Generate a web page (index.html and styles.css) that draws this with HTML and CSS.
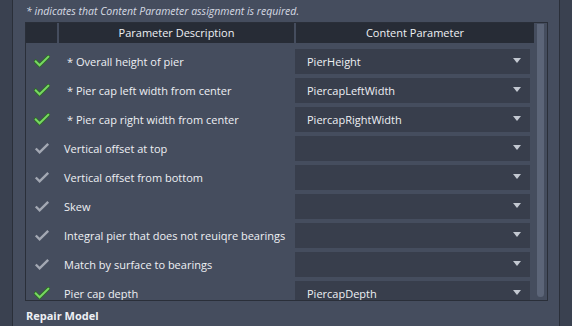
FILE: index.html
```html
<!DOCTYPE html>
<html lang="en">
<head>
  <meta charset="UTF-8">
  <title>Content Parameters</title>
  <link rel="stylesheet" href="styles.css">
</head>
<body>
  <div class="side side-left"></div>

  <div class="panel">
    <div class="note">* indicates that Content Parameter assignment is required.</div>

    <div class="grid-box">
      <div class="grid-main">
        <div class="grid-head">
          <div class="hcell"></div>
          <div class="hcell">Parameter Description</div>
          <div class="hcell">Content Parameter</div>
        </div>
        <div class="grid-body" id="rows"></div>
      </div>
      <div class="scroll"><div class="thumb"></div></div>
    </div>

    <div class="section">Repair Model</div>
  </div>

  <div class="side side-right"></div>

  <script>
    // Parameter rows: [done, description, assigned content parameter]
    const rows = [
      [true, ' * Overall height of pier', 'PierHeight'],
      [true, ' * Pier cap left width from center', 'PiercapLeftWidth'],
      [true, ' * Pier cap right width from center', 'PiercapRightWidth'],
      [false, 'Vertical offset at top', ''],
      [false, 'Vertical offset from bottom', ''],
      [false, 'Skew', ''],
      [false, 'Integral pier that does not reuiqre bearings', ''],
      [false, 'Match by surface to bearings', ''],
      [true, 'Pier cap depth', 'PiercapDepth']
    ];

    const list = document.getElementById('rows');
    rows.forEach(([done, desc, value]) => {
      const row = document.createElement('div');
      row.className = 'row';
      const check = done
        ? `<svg width="16" height="13" viewBox="0 0 16 13"><polyline points="1.8,6.5 5.6,10.3 14.2,1.8" fill="none" stroke="#2f6b2a" stroke-width="3.8" stroke-linecap="square"/><polyline points="1.8,6.5 5.6,10.3 14.2,1.8" fill="none" stroke="#78d862" stroke-width="2" stroke-linecap="square"/></svg>`
        : `<svg width="16" height="13" viewBox="0 0 16 13"><polyline points="1.8,6.5 5.6,10.3 14.2,1.8" fill="none" stroke="#a3a8b3" stroke-width="2.4"/></svg>`;
      row.innerHTML = `
        <div class="cell check">${check}</div>
        <div class="cell desc${desc.startsWith(' ') ? ' req' : ''}">${desc.trim()}</div>
        <div class="cell"><div class="dropdown"><span>${value}</span><i class="arrow"></i></div></div>
      `;
      list.appendChild(row);
    });
  </script>
</body>
</html>
```

FILE: styles.css
```css
:root {
  --panel: #454d5e;
  --side: #3a4150;
  --line: #2a2f39;
  --head: #272c36;
  --field: #383e4c;
  --text: #eef0f4;
}

body {
  margin: 0;
  height: 326px;
  overflow: hidden;
  display: flex;
  background-color: var(--panel);
  font-family: "Open Sans", sans-serif;
  font-size: 11px;
  color: var(--text);
}

.side {
  width: 12px;
  background-color: var(--side);
  flex-shrink: 0;
}

.side-left {
  border-right: 1px solid var(--line);
}

.side-right {
  width: 13px;
  border-left: 1px solid var(--line);
}

.panel {
  flex: 1;
  padding: 0 11px 0 12px;
  display: flex;
  flex-direction: column;
}

.note {
  height: 24px;
  line-height: 22px;
  padding-left: 1px;
  font-style: italic;
  font-size: 10.5px;
  color: #d6dae3;
}

.grid-box {
  height: 277px;
  border: 1px solid var(--line);
  display: flex;
}

.grid-main {
  flex: 1;
  display: flex;
  flex-direction: column;
}

.grid-head,
.row {
  display: grid;
  grid-template-columns: 31px 235px 238px;
  column-gap: 2px;
}

.hcell {
  height: 20px;
  line-height: 20px;
  background-color: var(--head);
  text-align: center;
}

.grid-body {
  flex: 1;
  overflow: hidden;
  padding-top: 4px;
}

.row {
  height: 29px;
}

.cell {
  display: flex;
  align-items: center;
}

.check {
  padding-left: 8px;
}

.check svg {
  margin-top: -1px;
}

.desc {
  padding-left: 5px;
}

.desc.req {
  padding-left: 8px;
}

.dropdown {
  height: 25px;
  margin-left: -1px;
  width: 235px;
  background-color: var(--field);
  display: flex;
  align-items: center;
  justify-content: space-between;
  padding: 0 9px 0 12px;
  box-sizing: border-box;
}

.arrow {
  width: 0;
  height: 0;
  border-left: 4px solid transparent;
  border-right: 4px solid transparent;
  border-top: 5px solid #c3c8d1;
  margin-top: -3px;
}

.scroll {
  width: 13px;
  padding: 1px 0 3px 3px;
  box-sizing: border-box;
}

.thumb {
  width: 7px;
  height: 100%;
  background-color: #5c6578;
  border-radius: 0 0 4px 4px;
}

.section {
  margin-top: 5px;
  padding-left: 1px;
  font-weight: bold;
  font-size: 11px;
  line-height: 20px;
}
```
